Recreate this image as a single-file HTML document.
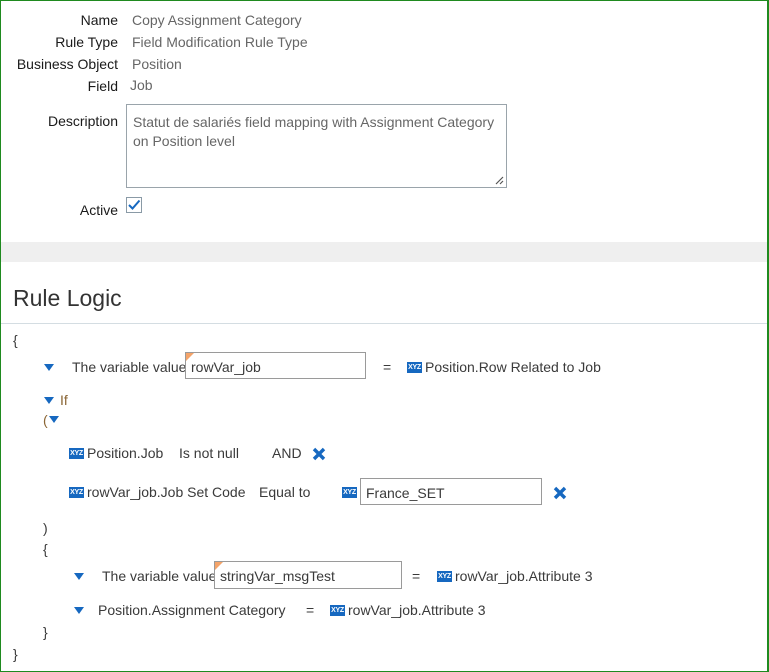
<!DOCTYPE html>
<html><head><meta charset="utf-8"><style>
*{margin:0;padding:0;box-sizing:border-box}
body{width:769px;height:672px;background:#fff;font-family:"Liberation Sans",sans-serif;font-size:14px;position:relative;overflow:hidden}
#frame{position:absolute;left:0;top:0;width:769px;height:672px;border:1px solid #1f8a1f;border-right-width:2px}
.t{position:absolute;white-space:nowrap;line-height:16px;color:#3a3a3a}
.l{position:absolute;right:651px;white-space:nowrap;line-height:16px;color:#1a1a1a;text-align:right}
.v{position:absolute;left:132px;white-space:nowrap;line-height:16px;color:#666}
.tri{position:absolute;width:0;height:0;border-left:5px solid transparent;border-right:5px solid transparent;border-top:7px solid #1668c0}
.ic{position:absolute;width:15px;height:11px;background:#1668c0;color:#fff;font-size:7px;font-weight:bold;line-height:11px;text-align:center;letter-spacing:-0.3px}
.in{position:absolute;border:1px solid #9a9a9a;background:#fff;color:#3a3a3a;line-height:16px;padding:6px 0 0 5px;font-size:14px}
.in.c:before{content:"";position:absolute;left:0;top:0;border-top:8px solid #f4a46a;border-right:8px solid transparent}
.x{position:absolute;width:16px;height:16px}
.br{color:#8a6534}
</style></head><body>
<div id="frame"></div>
<div class="l" style="top:12px">Name</div><div class="v" style="top:12px">Copy Assignment Category</div>
<div class="l" style="top:34px">Rule Type</div><div class="v" style="top:34px">Field Modification Rule Type</div>
<div class="l" style="top:56px">Business Object</div><div class="v" style="top:56px">Position</div>
<div class="l" style="top:78px">Field</div><div class="v" style="top:77px;left:130px">Job</div>
<div class="l" style="top:113px">Description</div>
<div style="position:absolute;left:126px;top:104px;width:381px;height:84px;border:1px solid #9aa4ab;padding:8px 0 0 6px;line-height:19px;color:#666;font-size:14px">Statut de salariés field mapping with Assignment Category on Position level
<svg style="position:absolute;right:2px;bottom:2px" width="10" height="10"><path d="M9 2L2 9M9 6L6 9" stroke="#555" stroke-width="1.2"/></svg></div>
<div class="l" style="top:202px">Active</div>
<div style="position:absolute;left:126px;top:197px;width:16px;height:16px;border:1px solid #8a9aa6;background:#fff"><svg width="14" height="14" style="position:absolute;left:0;top:0"><path d="M2 7L5.5 10.5L12.5 2.5" stroke="#1668c0" stroke-width="2" fill="none"/></svg></div>
<div style="position:absolute;left:1px;top:242px;width:766px;height:20px;background:#efefef"></div>
<div class="t" style="left:13px;top:284px;font-size:23px;line-height:28px;color:#333;font-weight:300">Rule Logic</div>
<div style="position:absolute;left:1px;top:323px;width:766px;height:1px;background:#d4dde2"></div>
<div class="t" style="left:13px;top:332px">{</div>
<div class="tri" style="left:44px;top:364px"></div>
<div class="t" style="left:72px;top:359px">The variable value</div>
<div class="in c" style="left:185px;top:352px;width:181px;height:27px">rowVar_job</div>
<div class="t" style="left:383px;top:359px">=</div>
<div class="ic" style="left:407px;top:362px">XYZ</div>
<div class="t" style="left:425px;top:359px">Position.Row Related to Job</div>
<div class="tri" style="left:44px;top:397px"></div>
<div class="t br" style="left:60px;top:392px">If</div>
<div class="t br" style="left:43px;top:412px">(</div>
<div class="tri" style="left:49px;top:416px"></div>
<div class="ic" style="left:69px;top:448px">XYZ</div>
<div class="t" style="left:87px;top:445px">Position.Job</div>
<div class="t" style="left:179px;top:445px">Is not null</div>
<div class="t" style="left:272px;top:445px">AND</div>
<svg class="x" style="left:311px;top:446px" viewBox="0 0 16 16"><path d="M3 3L13 13M13 3L3 13" stroke="#1668c0" stroke-width="3.4"/></svg>
<div class="ic" style="left:69px;top:487px">XYZ</div>
<div class="t" style="left:87px;top:484px">rowVar_job.Job Set Code</div>
<div class="t" style="left:259px;top:484px">Equal to</div>
<div class="ic" style="left:342px;top:487px">XYZ</div>
<div class="in" style="left:360px;top:478px;width:182px;height:27px">France_SET</div>
<svg class="x" style="left:552px;top:485px" viewBox="0 0 16 16"><path d="M3 3L13 13M13 3L3 13" stroke="#1668c0" stroke-width="3.4"/></svg>
<div class="t" style="left:43px;top:520px">)</div>
<div class="t" style="left:43px;top:541px">{</div>
<div class="tri" style="left:74px;top:573px"></div>
<div class="t" style="left:102px;top:568px">The variable value</div>
<div class="in c" style="left:214px;top:561px;width:188px;height:28px">stringVar_msgTest</div>
<div class="t" style="left:412px;top:568px">=</div>
<div class="ic" style="left:437px;top:571px">XYZ</div>
<div class="t" style="left:455px;top:568px">rowVar_job.Attribute 3</div>
<div class="tri" style="left:74px;top:607px"></div>
<div class="t" style="left:98px;top:602px">Position.Assignment Category</div>
<div class="t" style="left:306px;top:602px">=</div>
<div class="ic" style="left:330px;top:605px">XYZ</div>
<div class="t" style="left:348px;top:602px">rowVar_job.Attribute 3</div>
<div class="t" style="left:43px;top:624px">}</div>
<div class="t" style="left:13px;top:646px">}</div>
</body></html>
